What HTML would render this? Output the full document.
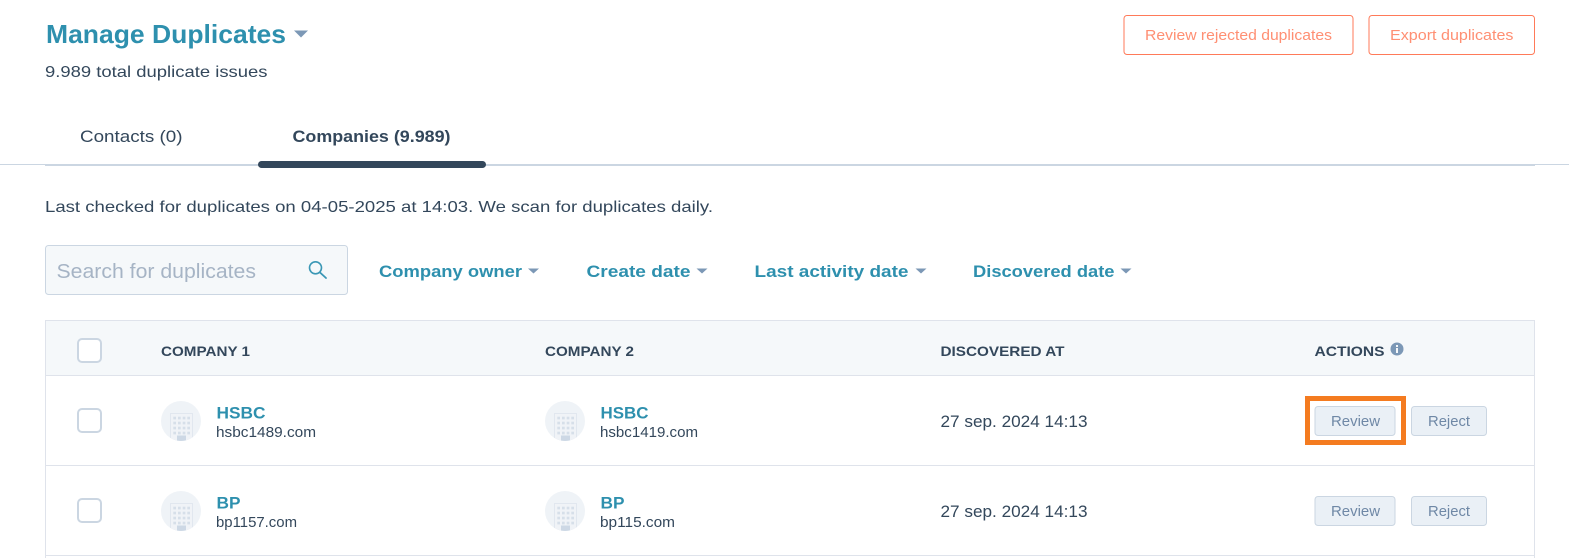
<!DOCTYPE html>
<html lang="en">
<head>
<meta charset="utf-8">
<title>Manage Duplicates</title>
<style>
html,body{margin:0;padding:0;background:#fff;width:1569px;height:558px;overflow:hidden}
svg{display:block}
text{font-family:"Liberation Sans",sans-serif;fill:#33475b}
.b{font-weight:700}
.t{fill:#2e90ae}
.h{font-size:14px;font-weight:700;fill:#33475b}
.d{font-size:15px}
.btn{fill:#eaf0f6;stroke:#cbd6e2}
.bt{font-size:14.5px;fill:#6f88a6}
.cb{fill:#fff;stroke:#cbd6e2;stroke-width:2}
.car{fill:#7c98b6}
</style>
</head>
<body>
<svg width="1569" height="558" viewBox="0 0 1569 558" xmlns="http://www.w3.org/2000/svg">
<defs>
<clipPath id="c"><circle cx="20" cy="20" r="20"/></clipPath>
<g id="av">
<circle cx="20" cy="20" r="20" fill="#eff3f7"/>
<g clip-path="url(#c)">
<rect x="9" y="12" width="23" height="28" fill="#e1e7ef"/>
<rect x="10" y="13" width="21" height="27" fill="#f0f3f7"/>
<g fill="#d6dfe9">
<rect x="12.300" y="15.700" width="2.700" height="2.700"/><rect x="17" y="15.700" width="2.700" height="2.700"/><rect x="21.700" y="15.700" width="2.700" height="2.700"/><rect x="26.300" y="15.700" width="2.700" height="2.700"/>
<rect x="12.300" y="20.700" width="2.700" height="2.700"/><rect x="17" y="20.700" width="2.700" height="2.700"/><rect x="21.700" y="20.700" width="2.700" height="2.700"/><rect x="26.300" y="20.700" width="2.700" height="2.700"/>
<rect x="12.300" y="25.700" width="2.700" height="2.700"/><rect x="17" y="25.700" width="2.700" height="2.700"/><rect x="21.700" y="25.700" width="2.700" height="2.700"/><rect x="26.300" y="25.700" width="2.700" height="2.700"/>
<rect x="12.300" y="30.700" width="2.700" height="2.700"/><rect x="26.300" y="30.700" width="2.700" height="2.700"/><rect x="17" y="30.700" width="2.700" height="2.700"/><rect x="21.700" y="30.700" width="2.700" height="2.700"/>
<rect x="16" y="34.500" width="9" height="6" fill="#cdd8e5"/>
</g>
</g>
</g>
</defs>

<!-- Header -->
<text x="46" y="43" class="b t" font-size="26" textLength="240" lengthAdjust="spacingAndGlyphs">Manage Duplicates</text>
<path class="car" d="M294 30.500h14l-7 7z"/>
<text x="45" y="77" font-size="16" textLength="222.500" lengthAdjust="spacingAndGlyphs">9.989 total duplicate issues</text>

<rect x="1124" y="15.500" width="229" height="39" rx="3" fill="#fff" stroke="#ff7a59"/>
<text x="1145" y="40" font-size="15" style="fill:#ff8f73" textLength="187" lengthAdjust="spacingAndGlyphs">Review rejected duplicates</text>
<rect x="1369" y="15.500" width="165.500" height="39" rx="3" fill="#fff" stroke="#ff7a59"/>
<text x="1390" y="40" font-size="15" style="fill:#ff8f73" textLength="123.500" lengthAdjust="spacingAndGlyphs">Export duplicates</text>

<!-- Tabs -->
<text x="80" y="142" font-size="16.500" textLength="102.500" lengthAdjust="spacingAndGlyphs">Contacts (0)</text>
<text x="292.500" y="142" class="b" font-size="16.500" textLength="158" lengthAdjust="spacingAndGlyphs">Companies (9.989)</text>
<rect x="0" y="164" width="1569" height="1" fill="#cbd6e2"/>
<rect x="45" y="164" width="1490" height="2" fill="#cbd6e2"/>
<rect x="258" y="161" width="228" height="7" rx="3.500" fill="#33475b"/>

<text x="45" y="212" font-size="16" textLength="668" lengthAdjust="spacingAndGlyphs">Last checked for duplicates on 04-05-2025 at 14:03. We scan for duplicates daily.</text>

<!-- Search -->
<rect x="45.500" y="245.500" width="302" height="49" rx="3" fill="#f5f8fa" stroke="#cbd6e2"/>
<text x="56.500" y="278" font-size="20" style="fill:#a6b4c5" textLength="199.500" lengthAdjust="spacingAndGlyphs">Search for duplicates</text>
<circle cx="315.500" cy="267.800" r="6" fill="none" stroke="#3a97b5" stroke-width="1.600"/>
<path d="M320 272.500l6 5.500" fill="none" stroke="#3a97b5" stroke-width="1.800" stroke-linecap="round"/>

<!-- Filters -->
<text x="379" y="277" class="b t" font-size="17" textLength="143" lengthAdjust="spacingAndGlyphs">Company owner</text>
<path class="car" d="M528 268.500h11l-5.500 5z"/>
<text x="586.500" y="277" class="b t" font-size="17" textLength="104" lengthAdjust="spacingAndGlyphs">Create date</text>
<path class="car" d="M696.500 268.500h11l-5.500 5z"/>
<text x="754.500" y="277" class="b t" font-size="17" textLength="154" lengthAdjust="spacingAndGlyphs">Last activity date</text>
<path class="car" d="M915.500 268.500h11l-5.500 5z"/>
<text x="973" y="277" class="b t" font-size="17" textLength="141.500" lengthAdjust="spacingAndGlyphs">Discovered date</text>
<path class="car" d="M1120.500 268.500h11l-5.500 5z"/>

<!-- Table -->
<rect x="45" y="320" width="1490" height="56" fill="#f5f8fa"/>
<g fill="#dfe3eb">
<rect x="45" y="320" width="1490" height="1"/>
<rect x="45" y="375" width="1490" height="1"/>
<rect x="45" y="465" width="1490" height="1"/>
<rect x="45" y="555" width="1490" height="1"/>
<rect x="45" y="320" width="1" height="238"/>
<rect x="1534" y="320" width="1" height="238"/>
</g>

<rect x="78" y="339" width="23" height="23" rx="4" class="cb"/>
<text x="161" y="356" class="h" textLength="89" lengthAdjust="spacingAndGlyphs">COMPANY 1</text>
<text x="545" y="356" class="h" textLength="89" lengthAdjust="spacingAndGlyphs">COMPANY 2</text>
<text x="940.500" y="356" class="h" textLength="124" lengthAdjust="spacingAndGlyphs">DISCOVERED AT</text>
<text x="1314.500" y="356" class="h" textLength="70" lengthAdjust="spacingAndGlyphs">ACTIONS</text>
<circle cx="1397" cy="349" r="6.500" fill="#7c98b6"/>
<rect x="1396" y="348" width="2" height="5" fill="#f5f8fa"/>
<rect x="1396" y="345" width="2" height="2" fill="#f5f8fa"/>

<!-- Row 1 -->
<rect x="78" y="409" width="23" height="23" rx="4" class="cb"/>
<use href="#av" x="161" y="401"/>
<text x="216.500" y="418.500" class="b t" font-size="17" textLength="49" lengthAdjust="spacingAndGlyphs">HSBC</text>
<text x="216" y="437" class="d" textLength="100" lengthAdjust="spacingAndGlyphs">hsbc1489.com</text>
<use href="#av" x="545" y="401"/>
<text x="600.500" y="418.500" class="b t" font-size="17" textLength="48" lengthAdjust="spacingAndGlyphs">HSBC</text>
<text x="600" y="437" class="d" textLength="98" lengthAdjust="spacingAndGlyphs">hsbc1419.com</text>
<text x="940.500" y="427" font-size="16.500" textLength="147" lengthAdjust="spacingAndGlyphs">27 sep. 2024 14:13</text>
<rect x="1307.500" y="398.500" width="96" height="44" fill="none" stroke="#f47b20" stroke-width="5"/>
<rect x="1315" y="406.500" width="80" height="29" rx="3" class="btn"/>
<text x="1331" y="426" class="bt" textLength="49" lengthAdjust="spacingAndGlyphs">Review</text>
<rect x="1411.500" y="406.500" width="75" height="29" rx="3" class="btn"/>
<text x="1428" y="426" class="bt" textLength="42" lengthAdjust="spacingAndGlyphs">Reject</text>

<!-- Row 2 -->
<rect x="78" y="499" width="23" height="23" rx="4" class="cb"/>
<use href="#av" x="161" y="491"/>
<text x="216.500" y="508.500" class="b t" font-size="17" textLength="24" lengthAdjust="spacingAndGlyphs">BP</text>
<text x="216" y="527" class="d" textLength="81" lengthAdjust="spacingAndGlyphs">bp1157.com</text>
<use href="#av" x="545" y="491"/>
<text x="600.500" y="508.500" class="b t" font-size="17" textLength="24" lengthAdjust="spacingAndGlyphs">BP</text>
<text x="600" y="527" class="d" textLength="75" lengthAdjust="spacingAndGlyphs">bp115.com</text>
<text x="940.500" y="517" font-size="16.500" textLength="147" lengthAdjust="spacingAndGlyphs">27 sep. 2024 14:13</text>
<rect x="1315" y="496.500" width="80" height="29" rx="3" class="btn"/>
<text x="1331" y="516" class="bt" textLength="49" lengthAdjust="spacingAndGlyphs">Review</text>
<rect x="1411.500" y="496.500" width="75" height="29" rx="3" class="btn"/>
<text x="1428" y="516" class="bt" textLength="42" lengthAdjust="spacingAndGlyphs">Reject</text>
</svg>
</body>
</html>
